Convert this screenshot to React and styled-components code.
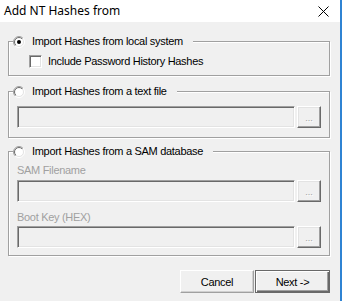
import React from "react";
import styled, { createGlobalStyle } from "styled-components";

const GlobalStyle = createGlobalStyle`
  html, body { margin: 0; padding: 0; background: #f0f0f0; }
  body {
    font-family: "Liberation Sans", Arial, sans-serif;
    font-size: 11px;
    letter-spacing: -0.3px;
    color: #000;
  }
  * { box-sizing: border-box; }
`;

const Window = styled.div`
  width: 342px;
  height: 301px;
  border-right: 2px solid #2f83d3;
  background: #f0f0f0;
  display: flex;
  flex-direction: column;
  overflow: hidden;
`;

const TitleBar = styled.div`
  height: 22px;
  background: #fff;
  display: flex;
  align-items: center;
  justify-content: space-between;
  padding: 0 11px 0 4px;
  font-family: "Noto Sans", "Liberation Sans", sans-serif;
  font-size: 12px;
  letter-spacing: 0;
  line-height: 16px;
`;

const Body = styled.div`
  padding: 13px 10px 0 8px;
  display: flex;
  flex-direction: column;
`;

const Group = styled.fieldset`
  margin: 0 0 ${(p) => p.$mb}px;
  padding: 0;
  min-width: 0;
  border: 1px solid #a0a0a0;
  box-shadow: inset 1px 1px 0 #fff, 1px 1px 0 #fff;
`;

const Legend = styled.legend`
  margin-left: 4px;
  padding: 0 10px 0 0;
  height: 13px;
  line-height: 13px;
  display: flex;
  align-items: center;
  gap: 7px;
  background: #f0f0f0;
`;

const GroupContent = styled.div`
  padding: ${(p) => p.$pt}px 8px ${(p) => p.$pb}px;
  display: flex;
  flex-direction: column;
`;

const CheckRow = styled.label`
  display: flex;
  align-items: center;
  gap: 6px;
  margin-left: 12px;
  height: 13px;
  line-height: 13px;
`;

const CheckBox = styled.span`
  width: 13px;
  height: 13px;
  flex: none;
  background: #fff;
  border: 1px solid;
  border-color: #a0a0a0 #fff #fff #a0a0a0;
  box-shadow: inset 1px 1px 0 #696969, inset -1px -1px 0 #e3e3e3;
`;

const FieldRow = styled.div`
  display: flex;
  gap: 2px;
`;

const TextBox = styled.div`
  width: 278px;
  height: 22px;
  background: #f0f0f0;
  border: 1px solid;
  border-color: #a0a0a0 #fff #fff #a0a0a0;
  box-shadow: inset 1px 1px 0 #696969, inset -1px -1px 0 #e3e3e3;
`;

const BrowseButton = styled.button`
  width: 24px;
  height: 22px;
  padding: 0 0 2px;
  background: #f0f0f0;
  border: 1px solid;
  border-color: #fff #696969 #696969 #fff;
  box-shadow: inset -1px -1px 0 #a0a0a0, inset 1px 1px 0 #e3e3e3;
  font-family: "Liberation Sans", Arial, sans-serif;
  font-size: 9px;
  letter-spacing: 0;
  color: #a0a0a0;
  text-shadow: 1px 1px 0 #fff;
  display: flex;
  align-items: flex-end;
  justify-content: center;
  line-height: 14px;
`;

const FieldLabel = styled.div`
  color: #a0a0a0;
  height: 13px;
  line-height: 13px;
  margin-top: ${(p) => p.$mt}px;
  margin-bottom: ${(p) => p.$mb}px;
`;

const ButtonRow = styled.div`
  display: flex;
  justify-content: flex-end;
  gap: 1px;
  margin-top: 14px;
`;

const DialogButton = styled.button`
  width: ${(p) => (p.$primary ? 75 : 74)}px;
  height: 23px;
  padding: 0;
  background: #f0f0f0;
  font-family: "Liberation Sans", Arial, sans-serif;
  font-size: 11px;
  letter-spacing: -0.3px;
  color: #000;
  border: 1px solid;
  border-color: ${(p) =>
    p.$primary ? "#696969" : "#fff #a0a0a0 #a0a0a0 #fff"};
  box-shadow: ${(p) =>
    p.$primary
      ? "inset 1px 1px 0 #fff, inset -1px -1px 0 #696969, inset -2px -2px 0 #a0a0a0"
      : "inset -1px -1px 0 #d0d0d0"};
`;

const Radio = ({ checked }) => (
  <svg width="12" height="12" viewBox="0 0 12 12" style={{ display: "block", flex: "none" }}>
    <defs>
      <linearGradient id="rOuter" x1="0" y1="0" x2="1" y2="1">
        <stop offset="0.5" stopColor="#a0a0a0" />
        <stop offset="0.5" stopColor="#ffffff" />
      </linearGradient>
      <linearGradient id="rInner" x1="0" y1="0" x2="1" y2="1">
        <stop offset="0.5" stopColor="#696969" />
        <stop offset="0.5" stopColor="#e3e3e3" />
      </linearGradient>
    </defs>
    <circle cx="6" cy="6" r="5.5" fill="none" stroke="url(#rOuter)" strokeWidth="1" />
    <circle cx="6" cy="6" r="4.5" fill="#fff" stroke="url(#rInner)" strokeWidth="1" />
    {checked && <circle cx="6" cy="6" r="2" fill="#000" />}
  </svg>
);

const CloseIcon = () => (
  <svg width="11" height="11" viewBox="0 0 11 11" style={{ display: "block" }}>
    <path d="M0.5 0.5 L10.5 10.5 M10.5 0.5 L0.5 10.5" stroke="#000" strokeWidth="1" fill="none" />
  </svg>
);

export default function App() {
  return (
    <>
      <GlobalStyle />
      <Window>
        <TitleBar>
          <span>Add NT Hashes from</span>
          <CloseIcon />
        </TitleBar>
        <Body>
          <Group $mb={9}>
            <Legend>
              <Radio checked />
              Import Hashes from local system
            </Legend>
            <GroupContent $pt={7} $pb={7}>
              <CheckRow>
                <CheckBox />
                Include Password History Hashes
              </CheckRow>
            </GroupContent>
          </Group>

          <Group $mb={7}>
            <Legend>
              <Radio />
              Import Hashes from a text file
            </Legend>
            <GroupContent $pt={8} $pb={9}>
              <FieldRow>
                <TextBox />
                <BrowseButton disabled>...</BrowseButton>
              </FieldRow>
            </GroupContent>
          </Group>

          <Group $mb={0}>
            <Legend>
              <Radio />
              Import Hashes from a SAM database
            </Legend>
            <GroupContent $pt={6} $pb={7}>
              <FieldLabel $mt={0} $mb={3}>SAM Filename</FieldLabel>
              <FieldRow>
                <TextBox />
                <BrowseButton disabled>...</BrowseButton>
              </FieldRow>
              <FieldLabel $mt={9} $mb={2}>Boot Key (HEX)</FieldLabel>
              <FieldRow>
                <TextBox />
                <BrowseButton disabled>...</BrowseButton>
              </FieldRow>
            </GroupContent>
          </Group>

          <ButtonRow>
            <DialogButton>Cancel</DialogButton>
            <DialogButton $primary>Next -&gt;</DialogButton>
          </ButtonRow>
        </Body>
      </Window>
    </>
  );
}
